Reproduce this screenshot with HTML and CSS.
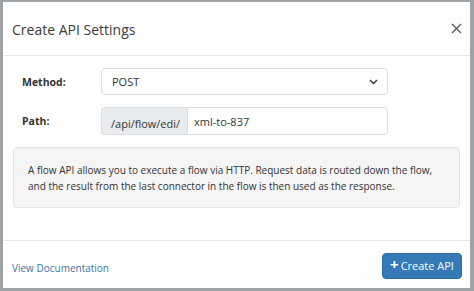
FILE: index.html
```html
<!DOCTYPE html>
<html lang="en">
<head>
  <meta charset="utf-8">
  <title>Create API Settings</title>
  <link rel="stylesheet" href="styles.css">
</head>
<body>
  <div class="modal">
    <div class="modal-header">
      <h4 class="modal-title">Create API Settings</h4>
      <button class="close" type="button">
        <svg width="11" height="11" viewBox="0 0 11 11"><path d="M1 1L10 10M10 1L1 10" stroke="#555" stroke-width="1.3" fill="none"/></svg>
      </button>
    </div>
    <div class="modal-body">
      <div class="form-row">
        <label>Method:</label>
        <div class="select">
          <span>POST</span>
          <svg width="9" height="6" viewBox="0 0 9 6"><path d="M1 1L4.5 4.5L8 1" stroke="#333" stroke-width="1.4" fill="none"/></svg>
        </div>
      </div>
      <div class="form-row">
        <label>Path:</label>
        <div class="input-group">
          <span class="addon">/api/flow/edi/</span>
          <span class="input">xml-to-837</span>
        </div>
      </div>
      <div class="well">
        A flow API allows you to execute a flow via HTTP. Request data is routed down the flow,
        and the result from the last connector in the flow is then used as the response.
      </div>
    </div>
    <div class="modal-footer">
      <a href="#" class="doc-link">View Documentation</a>
      <button class="btn-primary" type="button"><span class="plus">+</span>Create API</button>
    </div>
  </div>
</body>
</html>
```

FILE: styles.css
```css
* {
  margin: 0;
  padding: 0;
  box-sizing: border-box;
}

html,
body {
  width: 100%;
  height: 100%;
}

body {
  background-color: #9ea3a8;
  padding: 2px 4px 3px 3px;
  font-family: "Open Sans", "Noto Sans", sans-serif;
  color: #333;
}

.modal {
  background-color: #fff;
  height: 100%;
  display: flex;
  flex-direction: column;
}

.modal-header {
  height: 54px;
  border-bottom: 1px solid #e5e5e5;
  display: flex;
  align-items: center;
  justify-content: space-between;
  padding: 2px 7px 0 9px;
}

.modal-title {
  font-size: 14px;
  font-weight: 400;
  color: #3b3b3b;
}

.close {
  border: none;
  background: none;
  width: 14px;
  height: 14px;
  display: flex;
  align-items: center;
  justify-content: center;
  margin-top: -2px;
}

.modal-body {
  padding: 12px 10px 0 10px;
  flex: 1;
}

.form-row {
  display: flex;
  align-items: center;
  margin-bottom: 12px;
}

.form-row label {
  width: 88px;
  padding-left: 9px;
  font-size: 10.5px;
  font-weight: 700;
  color: #333;
  align-self: flex-start;
  padding-top: 7px;
}

.select {
  width: 287px;
  height: 27px;
  border: 1px solid #ddd;
  border-radius: 4px;
  display: flex;
  align-items: center;
  justify-content: space-between;
  padding: 0 9px 0 10px;
  font-size: 11px;
}

.input-group {
  width: 287px;
  height: 28px;
  display: flex;
  font-size: 11px;
}

.addon {
  width: 86px;
  background-color: #e9ecef;
  border: 1px solid #ddd;
  border-right: none;
  border-radius: 4px 0 0 4px;
  display: flex;
  align-items: center;
  padding-left: 9px;
  padding-top: 4px;
}

.input {
  flex: 1;
  border: 1px solid #ddd;
  border-radius: 0 4px 4px 0;
  display: flex;
  align-items: center;
  padding-left: 6px;
}

.well {
  margin-top: 3px;
  background-color: #f5f5f5;
  border: 1px solid #e3e3e3;
  border-radius: 4px;
  padding: 14px 14px 13px 14px;
  font-size: 10px;
  line-height: 16px;
  color: #333;
}

.modal-footer {
  height: 48px;
  border-top: 1px solid #e5e5e5;
  display: flex;
  align-items: center;
  justify-content: space-between;
  padding: 4px 8px 0 9px;
}

.doc-link {
  font-size: 10px;
  color: #3d73a8;
  text-decoration: none;
  margin-top: 2px;
}

.btn-primary {
  background-color: #337ab7;
  color: #fff;
  border: 1px solid #2e6da4;
  border-radius: 4px;
  width: 80px;
  height: 26px;
  font-family: "Open Sans", "Noto Sans", sans-serif;
  font-size: 11px;
  margin-bottom: 2px;
  display: flex;
  align-items: center;
  justify-content: center;
}

.plus {
  font-size: 15px;
  font-weight: 700;
  margin-right: 2px;
  line-height: 1;
  margin-top: -2px;
}
```
